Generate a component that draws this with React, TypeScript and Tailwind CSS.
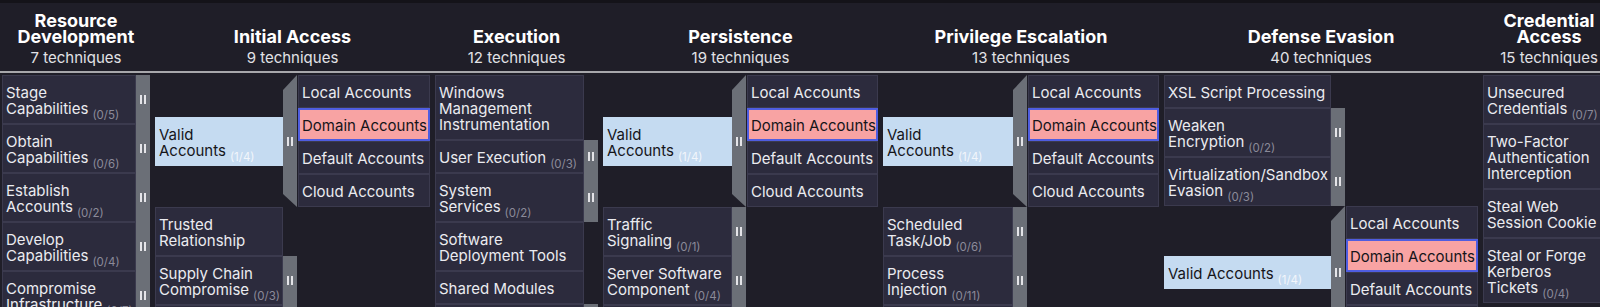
import type { ReactNode } from "react";

type Sub = { name: string; hot?: boolean };

type Technique = {
  lines: string[];
  count?: string;
  sub?: boolean;
  picked?: boolean;
  subs?: Sub[];
};

type Tactic = {
  title: string[];
  total: number;
  colW: string;
  techW: string;
  subW?: string;
  techniques: Technique[];
};

const validSubs: Sub[] = [
  { name: "Local Accounts" },
  { name: "Domain Accounts", hot: true },
  { name: "Default Accounts" },
  { name: "Cloud Accounts" },
];

const TACTICS: Tactic[] = [
  {
    title: ["Resource", "Development"],
    total: 7,
    colW: "w-[148px]",
    techW: "w-[134px]",
    techniques: [
      { lines: ["Stage", "Capabilities"], count: "(0/5)", sub: true },
      { lines: ["Obtain", "Capabilities"], count: "(0/6)", sub: true },
      { lines: ["Establish", "Accounts"], count: "(0/2)", sub: true },
      { lines: ["Develop", "Capabilities"], count: "(0/4)", sub: true },
      { lines: ["Compromise", "Infrastructure"], count: "(0/7)", sub: true },
      { lines: ["Acquire", "Infrastructure"], count: "(0/8)", sub: true },
    ],
  },
  {
    title: ["Initial Access"],
    total: 9,
    colW: "w-[275px]",
    techW: "w-[128px]",
    subW: "w-[132px]",
    techniques: [
      { lines: ["Valid", "Accounts"], count: "(1/4)", sub: true, picked: true, subs: validSubs },
      { lines: ["Trusted", "Relationship"] },
      { lines: ["Supply Chain", "Compromise"], count: "(0/3)", sub: true },
      { lines: ["Phishing"], count: "(0/3)", sub: true },
    ],
  },
  {
    title: ["Execution"],
    total: 12,
    colW: "w-[163px]",
    techW: "w-[149px]",
    techniques: [
      { lines: ["Windows", "Management", "Instrumentation"] },
      { lines: ["User Execution"], count: "(0/3)", sub: true },
      { lines: ["System", "Services"], count: "(0/2)", sub: true },
      { lines: ["Software", "Deployment Tools"] },
      { lines: ["Shared Modules"] },
      { lines: ["Scheduled", "Task/Job"], count: "(0/5)", sub: true },
    ],
  },
  {
    title: ["Persistence"],
    total: 19,
    colW: "w-[275px]",
    techW: "w-[129px]",
    subW: "w-[131px]",
    techniques: [
      { lines: ["Valid", "Accounts"], count: "(1/4)", sub: true, picked: true, subs: validSubs },
      { lines: ["Traffic", "Signaling"], count: "(0/1)", sub: true },
      { lines: ["Server Software", "Component"], count: "(0/4)", sub: true },
      { lines: ["Scheduled", "Task/Job"], count: "(0/5)", sub: true },
    ],
  },
  {
    title: ["Privilege Escalation"],
    total: 13,
    colW: "w-[276px]",
    techW: "w-[130px]",
    subW: "w-[131px]",
    techniques: [
      { lines: ["Valid", "Accounts"], count: "(1/4)", sub: true, picked: true, subs: validSubs },
      { lines: ["Scheduled", "Task/Job"], count: "(0/6)", sub: true },
      { lines: ["Process", "Injection"], count: "(0/11)", sub: true },
      { lines: ["Access Token", "Manipulation"], count: "(0/5)", sub: true },
    ],
  },
  {
    title: ["Defense Evasion"],
    total: 40,
    colW: "w-[314px]",
    techW: "w-[167px]",
    subW: "w-[132px]",
    techniques: [
      { lines: ["XSL Script Processing"] },
      { lines: ["Weaken", "Encryption"], count: "(0/2)", sub: true },
      { lines: ["Virtualization/Sandbox", "Evasion"], count: "(0/3)", sub: true },
      { lines: ["Valid Accounts"], count: "(1/4)", sub: true, picked: true, subs: validSubs },
    ],
  },
  {
    title: ["Credential", "Access"],
    total: 15,
    colW: "w-[132px]",
    techW: "w-[118px]",
    techniques: [
      { lines: ["Unsecured", "Credentials"], count: "(0/7)", sub: true },
      { lines: ["Two-Factor", "Authentication", "Interception"] },
      { lines: ["Steal Web", "Session Cookie"] },
      { lines: ["Steal or Forge", "Kerberos", "Tickets"], count: "(0/4)", sub: true },
    ],
  },
];

function Grip() {
  return (
    <div className="flex gap-[2px]">
      <span className="h-[9px] w-[2px] bg-[#e4e4e8]" />
      <span className="h-[9px] w-[2px] bg-[#e4e4e8]" />
    </div>
  );
}

function Bar({ open }: { open: boolean }) {
  return (
    <div
      className={`flex w-[14px] shrink-0 items-center justify-center bg-[#6b6f77] ${
        open ? "[clip-path:polygon(0_15px,100%_0,100%_100%,0_calc(100%_-_13px))]" : ""
      }`}
    >
      <Grip />
    </div>
  );
}

function Lines({ lines, count, light }: { lines: string[]; count?: string; light?: boolean }) {
  return (
    <>
      {lines.map((line, i) => (
        <div key={i} className="whitespace-nowrap">
          {line}
          {i === lines.length - 1 && count && (
            <span
              className={`ml-[4px] inline-block translate-y-[5px] text-[11.5px] leading-none ${
                light ? "text-[#f2f6fb]" : "text-[#8b8a99]"
              }`}
            >
              {count}
            </span>
          )}
        </div>
      ))}
    </>
  );
}

function TechCell({ t }: { t: Technique }) {
  return (
    <div
      className={`w-full border px-[3px] pt-[9px] pb-[6px] text-[15px] leading-[16px] ${
        t.picked
          ? "border-[#c5dbf1] bg-[#c5dbf1] text-[#15151a]"
          : "border-[#3b3a4e] bg-[#2c2b3d] text-[#ebebf0]"
      }`}
    >
      <Lines lines={t.lines} count={t.count} light={t.picked} />
    </div>
  );
}

function SubCell({ s }: { s: Sub }) {
  if (s.hot) {
    return (
      <div className="whitespace-nowrap border-2 border-[#4f5de0] bg-[#f8a3a3] px-[2px] pt-[8px] pb-[5px] text-[15px] leading-[16px] text-[#15151a]">
        {s.name}
      </div>
    );
  }
  return (
    <div className="whitespace-nowrap border border-[#3b3a4e] bg-[#2c2b3d] px-[3px] pt-[9px] pb-[6px] text-[15px] leading-[16px] text-[#ebebf0]">
      {s.name}
    </div>
  );
}

function Column({ tactic }: { tactic: Tactic }) {
  return (
    <div className={`${tactic.colW} flex shrink-0 flex-col`}>
      {tactic.techniques.map((t, i) => (
        <div key={i} className="flex">
          <div className={`${tactic.techW} flex shrink-0 items-center`}>
            <TechCell t={t} />
          </div>
          {t.sub ? <Bar open={!!t.subs} /> : <div className="w-[14px] shrink-0" />}
          {t.subs && (
            <div className={`ml-px shrink-0 ${tactic.subW ?? ""}`}>
              {t.subs.map((s) => (
                <SubCell key={s.name} s={s} />
              ))}
            </div>
          )}
        </div>
      ))}
    </div>
  );
}

function Header({ tactic }: { tactic: Tactic }): ReactNode {
  return (
    <div className={`${tactic.colW} shrink-0 pb-[4px] text-center`}>
      <div className="text-[18px] font-bold leading-[16px] text-white">
        {tactic.title.map((l) => (
          <div key={l}>{l}</div>
        ))}
      </div>
      <div className="mt-[4px] text-[15px] leading-[18px] text-[#e2e2e6]">
        {tactic.total} techniques
      </div>
    </div>
  );
}

export default function App() {
  return (
    <div className="h-[307px] w-[1600px] overflow-hidden border-t-[3px] border-[#141319] bg-[#1f1e28] [font-family:Inter,sans-serif]">
      <div className="flex h-[68px] items-end gap-[5px] pl-[2px]">
        {TACTICS.map((t) => (
          <Header key={t.title.join(" ")} tactic={t} />
        ))}
      </div>
      <div className="h-[2px] bg-[#a7a7ab]" />
      <div className="mt-[2px] flex items-start gap-[5px] pl-[2px]">
        {TACTICS.map((t) => (
          <Column key={t.title.join(" ")} tactic={t} />
        ))}
      </div>
    </div>
  );
}
